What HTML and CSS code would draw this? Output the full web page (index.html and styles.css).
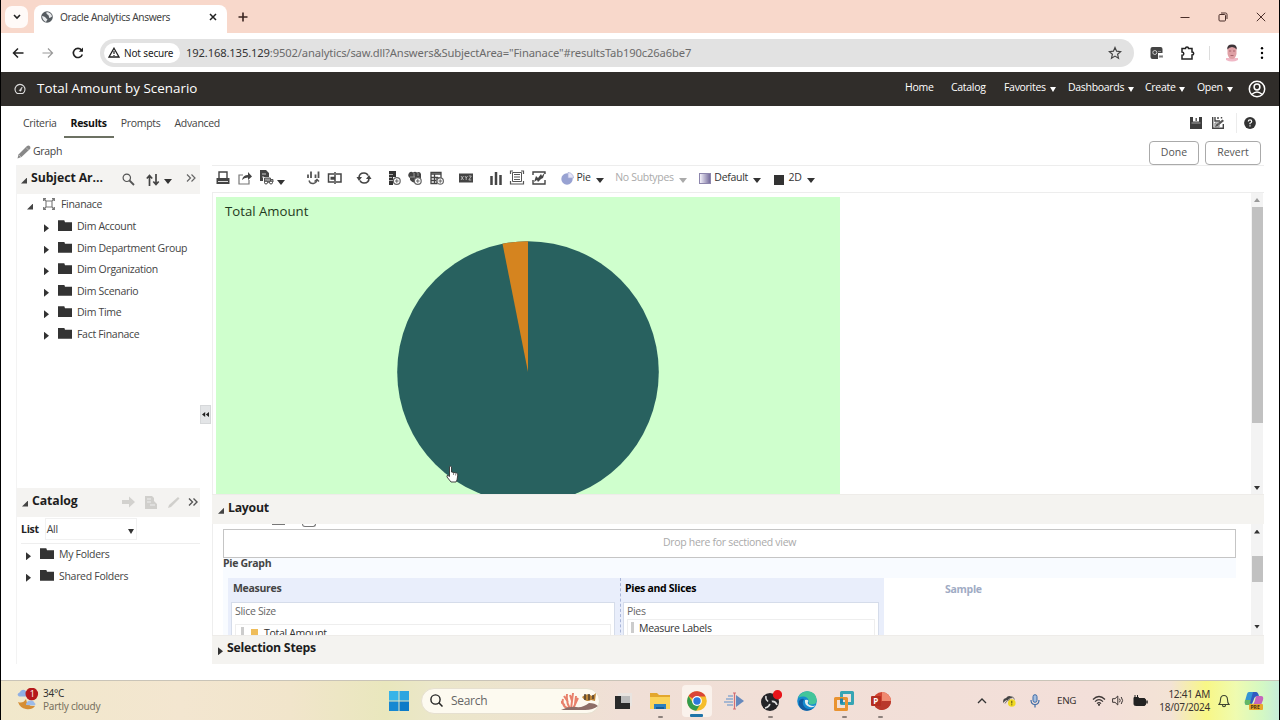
FILE: index.html
```html
<!DOCTYPE html>
<html lang="en">
<head>
  <meta charset="UTF-8">
  <meta name="viewport" content="width=device-width, initial-scale=1.0">
  <title>Oracle Analytics Answers</title>
  <link rel="stylesheet" href="styles.css">
</head>
<body>
  <div class="screen">

    <!-- Browser tab strip -->
    <div class="tab-strip">
      <div class="tab-search">
        <svg width="8" height="6" viewBox="0 0 8 6"><path d="M1 1l3 3 3-3" fill="none" stroke="#222" stroke-width="1.6"/></svg>
      </div>
      <div class="tab">
        <svg class="globe" width="12" height="12" viewBox="0 0 12 12"><circle cx="6" cy="6" r="5.800" fill="#555b60"/><path d="M1 5q2.500 0 3.500 1.500T6.500 8L5 11Q1.500 9.500 1 5zM5.500 1q-.5 2 1 2.500T8 6t3-.5Q10.500 1.500 5.500 1z" fill="#e8eaec"/></svg>
        <span class="tab-title">Oracle Analytics Answers</span>
        <svg width="8" height="8" viewBox="0 0 8 8"><path d="M1 1l6 6M7 1L1 7" stroke="#222" stroke-width="1.500"/></svg>
      </div>
      <svg class="new-tab" width="10" height="10" viewBox="0 0 10 10"><path d="M5 .5v9M.5 5h9" stroke="#3a2420" stroke-width="1.600"/></svg>
      <div class="window-buttons">
        <svg width="10" height="10" viewBox="0 0 10 10"><path d="M.5 5.500h9" stroke="#4a2f2a"/></svg>
        <svg width="10" height="10" viewBox="0 0 10 10"><path d="M1 3.500q0-1 1-1h4.500q1 0 1 1V8q0 1-1 1H2q-1 0-1-1zM3 1h4.500Q9 1 9 2.500V7" fill="none" stroke="#4a2f2a"/></svg>
        <svg width="10" height="10" viewBox="0 0 10 10"><path d="M.8.8l8.400 8.400M9.200.8L.8 9.200" stroke="#4a2f2a"/></svg>
      </div>
    </div>

    <!-- Browser address bar -->
    <div class="address-bar">
      <svg class="nav" width="12" height="12" viewBox="0 0 12 12"><path d="M11.500 6H1.500M6 1.500L1.500 6 6 10.500" fill="none" stroke="#222" stroke-width="1.500"/></svg>
      <svg class="nav" width="12" height="12" viewBox="0 0 12 12"><path d="M.5 6h10M6 1.500L10.500 6 6 10.500" fill="none" stroke="#999" stroke-width="1.200"/></svg>
      <svg class="nav" width="12" height="12" viewBox="0 0 12 12"><path d="M10.300 7.500A4.600 4.600 0 1 1 9.500 3" fill="none" stroke="#222" stroke-width="1.600"/><path d="M11 .5v4.300H6.800z" fill="#222"/></svg>
      <div class="omnibox">
        <div class="not-secure">
          <svg width="12" height="11" viewBox="0 0 12 11"><path d="M6 1.200L11 10H1z" fill="none" stroke="#222" stroke-width="1.300"/><path d="M6 4v3M6 8v1" stroke="#222" stroke-width="1.200"/></svg>
          <span>Not secure</span>
        </div>
        <span class="url"><b>192.168.135.129</b>:9502/analytics/saw.dll?Answers&amp;SubjectArea="Finanace"#resultsTab190c26a6be7</span>
        <svg class="star" width="14" height="14" viewBox="0 0 14 14"><path d="M7 1.500l1.600 3.700 4 .4-3 2.700.9 3.900L7 10.100l-3.500 2.100.9-3.900-3-2.700 4-.4z" fill="none" stroke="#444" stroke-width="1.200"/></svg>
      </div>
      <svg class="ext" width="13" height="12" viewBox="0 0 13 12"><path d="M2.500 0h8Q12.500 0 12.500 2v4H8v6H2.500Q.5 12 .5 10V2q0-2 2-2z" fill="#444"/><circle cx="4.800" cy="5.500" r="2" fill="none" stroke="#ccc"/><path d="M8 4.500h3M9 8.500h4v2H9z" fill="#777" stroke="#bbb" stroke-width=".6"/></svg>
      <svg class="puzzle" width="15" height="14" viewBox="0 0 15 14"><path d="M2 2.500h3.500q0-1.500 1.500-1.500t1.500 1.500H12v3.500q1.700 0 1.700 1.500T12 9v4H2V9.300q1.800 0 1.800-1.600T2 6z" fill="none" stroke="#222" stroke-width="1.500"/></svg>
      <span class="bar-divider"></span>
      <svg class="avatar" width="14" height="18" viewBox="0 0 14 18"><path d="M1 14h12v2q-6 3-12 0z" fill="#f0b8c6"/><path d="M2.500 5q0-4 4.500-4t4.500 4v5q-1 5-4.500 5T2.500 10z" fill="#dfa0a5"/><path d="M2.300 5.500Q1.800.5 7 .5t4.700 5Q10 3 7 3T2.300 5.500z" fill="#3d3438"/><path d="M4 7h2.200M8 7h2.200M5.500 11.500h3" stroke="#9a5560" stroke-width=".8"/></svg>
      <svg class="kebab" width="4" height="14" viewBox="0 0 4 14"><circle cx="2" cy="2.300" r="1.200"/><circle cx="2" cy="7" r="1.200"/><circle cx="2" cy="11.700" r="1.200"/></svg>
    </div>

    <!-- Application header -->
    <header class="app-header">
      <svg width="12" height="12" viewBox="0 0 12 12"><path d="M3.200 10.500a5 5 0 1 1 5.600 0z" fill="none" stroke="#ddd" stroke-width="1.100"/><path d="M5.200 7.500l3-3.500-1.400 4.200z" fill="#ddd" stroke="#ddd" stroke-width=".6"/></svg>
      <h1>Total Amount by Scenario</h1>
      <nav>
        <a class="nav-home">Home</a>
        <a class="nav-catalog">Catalog</a>
        <a class="nav-favorites">Favorites<i class="caret"></i></a>
        <a class="nav-dashboards">Dashboards<i class="caret"></i></a>
        <a class="nav-create">Create<i class="caret"></i></a>
        <a class="nav-open">Open<i class="caret"></i></a>
      </nav>
      <svg class="user" width="18" height="18" viewBox="0 0 18 18"><g fill="none" stroke="#fff" stroke-width="1.500"><circle cx="9" cy="9" r="7.700"/><circle cx="9" cy="7" r="2.900"/><path d="M4 14.300q5-4.600 10 0"/></g></svg>
    </header>

    <!-- Answers editor -->
    <main class="page">
      <div class="tabs-row">
        <a class="page-tab">Criteria</a>
        <a class="page-tab active">Results</a>
        <a class="page-tab">Prompts</a>
        <a class="page-tab">Advanced</a>
        <div class="page-actions">
          <svg width="12" height="12" viewBox="0 0 12 12"><path d="M0 0h3v4.500h6V0h3v12H0z" fill="#3c3c3c"/><path d="M6.200 1v3" stroke="#444" stroke-width="1.300"/><path d="M1.500 6h9" stroke="#bbb" stroke-width=".8"/></svg>
          <svg width="13" height="12" viewBox="0 0 13 12"><path d="M.7 0v11.300h10.600V7M3 0v4h5M6 0v2M9.500 0v1.500" fill="none" stroke="#444" stroke-width="1.400"/><path d="M3 10l1-2.500 6.500-5 1.500 1.600L5.500 9.300z" fill="#555"/><path d="M3 6h4v4H3z" fill="none" stroke="#777"/></svg>
          <span class="action-divider"></span>
          <svg width="12" height="12" viewBox="0 0 12 12"><circle cx="6" cy="6" r="5.900" fill="#333"/><path d="M4.300 4.600q0-1.700 1.700-1.700t1.700 1.500Q7.700 5.500 6 6.200v1M6 8.200v1.200" fill="none" stroke="#fff" stroke-width="1.200"/></svg>
        </div>
      </div>

      <div class="view-row">
        <svg width="14" height="14" viewBox="0 0 14 14"><path d="M.5 13.500l1-4L10 1q2-1 3 .5t0 2.500L4.500 12z" fill="#888"/><path d="M2 10l2 2M9 2.500l2.500 2.500" stroke="#bbb"/></svg>
        <span>Graph</span>
        <button class="btn btn-done">Done</button>
        <button class="btn btn-revert">Revert</button>
      </div>

      <div class="workspace">
        <aside class="sidebar">
          <div class="pane-header">
            <i class="tri-open"></i>
            <h2>Subject Ar...</h2>
            <div class="pane-tools subject-tools">
              <svg width="13" height="13" viewBox="0 0 13 13"><circle cx="4.800" cy="4.800" r="3.700" fill="none" stroke="#555" stroke-width="1.200"/><path d="M7.500 7.500L12 12" stroke="#555" stroke-width="1.800"/></svg>
              <svg width="14" height="12" viewBox="0 0 14 12"><path d="M3.500 12V2M.8 4.500l2.700-3 2.700 3M10 0v10M7.300 7.500l2.700 3 2.700-3" fill="none" stroke="#444" stroke-width="1.700"/></svg>
              <i class="caret dark"></i>
              <svg width="10" height="8" viewBox="0 0 10 8"><path d="M1 .5L4.500 4 1 7.500M5.500.5L9 4 5.500 7.500" fill="none" stroke="#666" stroke-width="1.200"/></svg>
            </div>
          </div>
          <div class="tree subject-tree">
            <div class="tree-root"><i class="tri-open"></i>
              <svg width="12" height="12" viewBox="0 0 12 12"><path d="M3 3h6v6H3zM.6 3V.6H3M9 .6h2.400V3M11.400 9v2.400H9M3 11.400H.6V9M3 3L1 1M9 3l2-2M9 9l2 2M3 9l-2 2" fill="none" stroke="#777" stroke-width="1.100"/></svg>
              <span>Finanace</span></div>
            <div class="tree-item"><i class="tri"></i><i class="folder"></i><span>Dim Account</span></div>
            <div class="tree-item"><i class="tri"></i><i class="folder"></i><span>Dim Department Group</span></div>
            <div class="tree-item"><i class="tri"></i><i class="folder"></i><span>Dim Organization</span></div>
            <div class="tree-item"><i class="tri"></i><i class="folder"></i><span>Dim Scenario</span></div>
            <div class="tree-item"><i class="tri"></i><i class="folder"></i><span>Dim Time</span></div>
            <div class="tree-item"><i class="tri"></i><i class="folder"></i><span>Fact Finanace</span></div>
          </div>
          <div class="pane-header catalog-header">
            <i class="tri-open"></i>
            <h2>Catalog</h2>
            <div class="pane-tools catalog-tools">
              <svg width="13" height="12" viewBox="0 0 13 12"><path d="M0 4h7V.5L13 6l-6 5.500V8H0z" fill="#d2d1ce"/></svg>
              <svg width="14" height="13" viewBox="0 0 14 13"><path d="M1 0h7l2 2v3l3 3v5H1z" fill="#d0cfcc"/><path d="M3 3h4M3 6h4M6 9h5" stroke="#eee"/></svg>
              <svg width="13" height="13" viewBox="0 0 13 13"><path d="M1 12l1-3L11 1l1.500 1.500L4 11z" fill="#d0cfcc"/></svg>
              <svg width="10" height="8" viewBox="0 0 10 8"><path d="M1 .5L4.500 4 1 7.500M5.500.5L9 4 5.500 7.500" fill="none" stroke="#555" stroke-width="1.400"/></svg>
            </div>
          </div>
          <div class="list-row">
            <b>List</b>
            <div class="list-select"><span>All</span><i class="caret dark"></i></div>
          </div>
          <div class="tree catalog-tree">
            <div class="tree-item"><i class="tri"></i><i class="folder"></i><span>My Folders</span></div>
            <div class="tree-item"><i class="tri"></i><i class="folder"></i><span>Shared Folders</span></div>
          </div>
        </aside>

        <div class="splitter">
          <div class="collapse"><svg width="7" height="5" viewBox="0 0 7 5"><path d="M3.200 0v5L0 2.500zM7 0v5L3.800 2.500z" fill="#222"/></svg></div>
        </div>

        <section class="editor">
          <div class="toolbar">
            <div class="tool-group">
              <svg width="16" height="16" viewBox="0 0 16 16"><path d="M4 8V2h8v6" fill="none" stroke="#444" stroke-width="1.400"/><path d="M1.500 8h13v6h-13z" fill="#444"/><path d="M3 11.500h10" stroke="#ddd"/></svg>
              <svg width="16" height="16" viewBox="0 0 16 16"><path d="M6 5H2v9h10v-4" fill="none" stroke="#777" stroke-width="1.200"/><path d="M5 10q1-5 6-5V2l4 4.500-4 3.500V7.500Q7 7.500 5 10z" fill="#444"/></svg>
              <svg width="16" height="16" viewBox="0 0 16 16"><path d="M2 0h6l3 3v4H5v4H2z" fill="#444"/><path d="M4 4h4M4 7h2" stroke="#ccc"/><path d="M6.500 8h6v4h-6zM12 9.500h3V12M6.500 12H15" fill="#999" stroke="#555"/><circle cx="8" cy="12.500" r="1.500" fill="#fff" stroke="#444"/><circle cx="13" cy="12.500" r="1.500" fill="#fff" stroke="#444"/></svg>
              <i class="caret dark export-caret"></i>
            </div>
            <div class="tool-group">
              <svg width="16" height="16" viewBox="0 0 16 16"><path d="M3 4.500V8M6 1.500V8M10.500 4.500V8M13.500 1.500V8" stroke="#555" stroke-width="1.800"/><path d="M4 10.500q1 3.500 4.500 3 3-.5 3.500-3.500M9.500 11.500L12 9.500l2 2" fill="none" stroke="#555" stroke-width="1.400"/></svg>
              <svg width="16" height="16" viewBox="0 0 16 16"><path d="M7 4H1.500v8H7M3.500 7.500H7V9H3.500M9 4h5v8H9M8 2v12" fill="none" stroke="#444" stroke-width="1.500"/></svg>
            </div>
            <div class="tool-group">
              <svg width="16" height="16" viewBox="0 0 16 16"><path d="M3 8q0-5 5-5 3 0 4 2.500M13 8q0 5-5 5-3 0-4-2.500" fill="none" stroke="#444" stroke-width="1.600"/><path d="M.5 7h5.500L3 11zM10 9h5.500L13 5z" fill="#444"/></svg>
            </div>
            <div class="tool-group">
              <svg width="16" height="16" viewBox="0 0 16 16"><path d="M3 1h7v6H7v8H3z" fill="#333"/><path d="M3 4.500h4M3 7.500h3M3 10.500h4" stroke="#aaa"/><circle cx="10.800" cy="11" r="3.400" fill="#fff" stroke="#666" stroke-width="1.200"/><path d="M9 11h3.600M10.800 9.200v3.600" stroke="#666"/></svg>
              <svg width="16" height="16" viewBox="0 0 16 16"><path d="M2 3q2-2 4-.5Q8 1 10 2.500 13 1 14 4v4H8v5Q2 11 3 8 0 6 2 3z" fill="#444"/><path d="M7 3v4M3 7h5M11 3v3" stroke="#999"/><circle cx="10.800" cy="11" r="3.400" fill="#fff" stroke="#666" stroke-width="1.200"/><path d="M9 11h3.600M10.800 9.200v3.600" stroke="#666"/></svg>
              <svg width="16" height="16" viewBox="0 0 16 16"><path d="M2 2.500h10V8H8v5.500H2z" fill="#fff" stroke="#444" stroke-width="1.300"/><path d="M2 4h10M2 7.500h7M2 10.500h5M5.500 4v9" stroke="#444" stroke-width="1.300"/><circle cx="11.200" cy="11" r="3.200" fill="#fff" stroke="#666" stroke-width="1.200"/><path d="M9.500 11h3.600M11.200 9.300v3.600" stroke="#666"/></svg>
            </div>
            <div class="tool-group">
              <svg width="16" height="16" viewBox="0 0 16 16"><path d="M1 3.500h14v9H1z" fill="#444"/><path d="M3 6l2.500 4M5.500 6L3 10M7 6l1.200 2L9.500 6M8.200 8v2M10.800 6h2.500l-2.500 4h2.500" fill="none" stroke="#ccc" stroke-width=".8"/></svg>
            </div>
            <div class="tool-group">
              <svg width="16" height="16" viewBox="0 0 16 16"><path d="M3.500 6v9M8 2v13M12.500 5v10" stroke="#444" stroke-width="2.500"/></svg>
              <svg width="16" height="16" viewBox="0 0 16 16"><path d="M3.500 2.500h9v9h-9z" fill="none" stroke="#555"/><path d="M5 4.500h6M5 7h6M5 9.500h6M1.500 4V1H4M12 1h2.500v3M1.500 11v3h13v-3" fill="none" stroke="#555" stroke-width="1.200"/></svg>
              <svg width="16" height="16" viewBox="0 0 16 16"><path d="M2 5V2h12v2M2 10v4h12v-4" fill="none" stroke="#444" stroke-width="1.400"/><path d="M3 12l2-6 2 2 3-4 1 2 3-4-2 6-2 1-3 3-1-2z" fill="#444"/></svg>
            </div>
            <div class="tool-menu">
              <svg width="13" height="13" viewBox="0 0 13 13"><circle cx="6" cy="7" r="5.700" fill="#98a2d2"/><path d="M7 6V.5A5.500 5.500 0 0 1 12.500 6z" fill="#e4e4f8" stroke="#a6acd5" stroke-width=".7"/></svg>
              <span>Pie</span><i class="caret dark"></i>
            </div>
            <div class="tool-menu disabled"><span>No Subtypes</span><i class="caret"></i></div>
            <div class="tool-menu menu-default"><i class="swatch"></i><span>Default</span><i class="caret dark"></i></div>
            <div class="tool-menu menu-2d"><i class="square"></i><span>2D</span><i class="caret dark"></i></div>
          </div>

          <div class="graph-pane">
            <div class="graph">
              <div class="graph-title">Total Amount</div>
              <svg class="pie" width="262" height="262" viewBox="-131 -131 262 262">
                <circle r="130.800" fill="#28615f"/>
                <path d="M0 0L-25.500-128.300A130.800 130.800 0 0 1 0-130.800z" fill="#d5841f"/>
              </svg>
            </div>
            <div class="scrollbar graph-scroll">
              <i class="arrow-up light"></i>
              <div class="thumb"></div>
              <i class="arrow-down"></i>
            </div>
          </div>

          <div class="section-header"><i class="tri-open"></i><h2>Layout</h2></div>

          <div class="layout-pane">
            <div class="layout-body">
              <div class="cut-icons"><i class="cut-line"></i><i class="cut-box"></i></div>
              <div class="drop-zone">Drop here for sectioned view</div>
              <div class="pie-layout">
                <h3>Pie Graph</h3>
                <div class="layout-cols">
                  <div class="col measures">
                    <h4>Measures</h4>
                    <div class="box">
                      <span class="box-label">Slice Size</span>
                      <div class="chip"><i class="grip"></i><i class="measure-icon"></i><span>Total Amount</span></div>
                    </div>
                  </div>
                  <div class="col slices">
                    <h4>Pies and Slices</h4>
                    <div class="box">
                      <span class="box-label">Pies</span>
                      <div class="chip"><i class="grip"></i><span>Measure Labels</span></div>
                    </div>
                  </div>
                  <div class="col sample">Sample</div>
                </div>
              </div>
            </div>
            <div class="scrollbar layout-scroll">
              <i class="arrow-up"></i>
              <div class="thumb"></div>
              <i class="arrow-down"></i>
            </div>
          </div>

          <div class="section-header"><i class="tri"></i><h2>Selection Steps</h2></div>
        </section>
      </div>
    </main>

    <!-- Windows taskbar -->
    <footer class="taskbar">
      <svg class="weather" width="22" height="22" viewBox="0 0 22 22"><path d="M2 8.500Q-1 6 2.500 4.500 5 0 9 3l2 5.500z" fill="#8fb0e4"/><path d="M1 14q5 2 8-3 1 8 9 7-3 4-9 3T1 14z" fill="#d58e35"/><path d="M9 17q0-4 4-4.500 4-.5 4.500 2.500 2 1 0 2.500z" fill="#9dbbe8"/><circle cx="14.800" cy="6" r="6.300" fill="#b5191c"/><text x="12.700" y="9.200" class="badge-text">1</text></svg>
      <div class="weather-text"><span>34°C</span><span class="muted">Partly cloudy</span></div>

      <svg class="start" width="20" height="20" viewBox="0 0 20 20"><path d="M0 0h9.500v9.500H0z" fill="#36b4e8"/><path d="M10.500 0H20v9.500h-9.500z" fill="#2ba5e0"/><path d="M0 10.500h9.500V20H0z" fill="#1688d2"/><path d="M10.500 10.500H20V20h-9.500z" fill="#0c7bc8"/></svg>
      <div class="search">
        <svg width="13" height="13" viewBox="0 0 13 13"><circle cx="5.500" cy="5.500" r="4.600" fill="none" stroke="#222" stroke-width="1.400"/><path d="M8.800 8.800L12.500 12.500" stroke="#222" stroke-width="1.500"/></svg>
        <span>Search</span>
        <svg class="coral" width="37" height="20" viewBox="0 0 37 20"><path d="M8 18Q0 15 2 8M9 18Q5 11 6 3M10 18q1-8 2-16M12 18q3-7 5-11M4 14Q1 13 0 10M7 11L3 5M11 10L9 4M14 13l1-8" fill="none" stroke="#e8806b" stroke-width="2"/><path d="M0 19q8-4 15-3t13-4q6 0 9 3-5 4-13 4z" fill="#8c6e68"/><path d="M21 6q5-5 10-1l4-3-1 8-4-1q-5 3-9-3z" fill="#bd8638"/><path d="M24 3v6M28 3v6M32 4v4" stroke="#3d3430" stroke-width="1.300"/></svg>
      </div>
      <div class="apps">
        <div class="app"><svg width="20" height="20" viewBox="0 0 20 20"><path d="M5 2h14v13H5z" fill="#e9e4e0"/><path d="M2 5h6v7h9v6H2z" fill="#292929"/><path d="M8 5h9v7H8z" fill="#bbb"/></svg></div>
        <div class="app running"><svg width="20" height="20" viewBox="0 0 20 20"><path d="M0 2h7l2 2h11v14H0z" fill="#e3a72e"/><path d="M0 6h20v12H0z" fill="#fbd35a"/><path d="M4 13h12v5H4z" fill="#2c7fbe"/><path d="M6 16h8v2H6z" fill="#185c94"/></svg></div>
        <div class="app active"><svg width="20" height="20" viewBox="0 0 20 20"><circle cx="10" cy="10" r="9.800" fill="#f5bd2b"/><path d="M10 10L1.500 5A9.800 9.800 0 0 1 18.700 5.500H10z" fill="#da4436"/><path d="M10 10l-3.900 2.300L1.500 5a9.800 9.800 0 0 0 7.700 14.800l4.600-7.500z" fill="#329b4e"/><circle cx="10" cy="10" r="4.900" fill="#fff"/><circle cx="10" cy="10" r="3.700" fill="#2c78dc"/></svg></div>
        <div class="app"><svg width="20" height="20" viewBox="0 0 20 20"><path d="M4 5h5M2 8h7M0 11h9M3 14h6" stroke="#8daad0" stroke-width="1.300"/><path d="M12 4l8 6-8 6z" fill="#6689bd"/><path d="M10.500 2v16M9 2h3M9 18h3" stroke="#d36d73" stroke-width="1.200"/></svg></div>
        <div class="app running"><svg width="22" height="22" viewBox="0 0 22 22"><circle cx="10" cy="12" r="9" fill="#242428"/><path d="M10 12q-5-1-4-6M10 12q5-2 7 3M10 12q0 5-5 6" fill="none" stroke="#ddd" stroke-width="1.600"/><circle cx="10" cy="12" r="2" fill="#242428"/><circle cx="17.500" cy="4.700" r="4.700" fill="#e8141a"/></svg></div>
        <div class="app"><svg width="20" height="20" viewBox="0 0 20 20"><circle cx="10" cy="10" r="9.800" fill="#168bd0"/><path d="M1 7Q4 0 11 .3q8 .7 8.800 8.700-.3 5-5.800 4.500-3-.5-2-3Q11 6 7 5.500 3 5 1 7z" fill="#43c59a"/><path d="M7 8q-3 5 1 8.500 4 3 9 0-5 5-11 2.500Q1 16 2 10q2-3 5-2z" fill="#115a9f"/><path d="M8 9q-1 5 4.500 7 4 1 6-1.500-3 1-6-.5t-1-4q-1-2-3.500-1z" fill="#e4efee"/></svg></div>
        <div class="app running"><svg width="20" height="20" viewBox="0 0 20 20"><path d="M7.500 1.500h11v11h-11z" fill="none" stroke="#37a5b4" stroke-width="3" stroke-linejoin="round"/><path d="M1.500 7.500h11v11h-11z" fill="none" stroke="#e99331" stroke-width="3" stroke-linejoin="round"/><path d="M7.500 12.500V7.500" fill="none" stroke="#1e83ad" stroke-width="3"/></svg></div>
        <div class="app running"><svg width="20" height="20" viewBox="0 0 20 20"><circle cx="11" cy="10" r="9" fill="#cf4532"/><path d="M11 1a9 9 0 0 1 9 9h-9z" fill="#f08a70"/><path d="M20 10a9 9 0 0 1-16 5.500l7-5.500z" fill="#b8382b"/><rect y="5" width="10" height="10" rx="1" fill="#b52d20"/><text x="2.300" y="13" class="ppt-text">P</text></svg></div>
      </div>

      <div class="tray">
        <svg class="t-chevron" width="10" height="6" viewBox="0 0 10 6"><path d="M1 5l4-4 4 4" fill="none" stroke="#333" stroke-width="1.300"/></svg>
        <svg class="t-cloud" width="14" height="12" viewBox="0 0 14 12"><path d="M1.500 8Q0 4 4 3q3-4 7 0-4 0-5 2-3 0-4.500 3z" fill="#444"/><path d="M3 8.500q1-3 5-4M8 1.500q4 0 4.500 3" fill="none" stroke="#777"/><circle cx="9.800" cy="8" r="3.800" fill="#f0d923"/><path d="M9.800 5.800v2.700M9.800 9.300v1" stroke="#554b10"/></svg>
        <svg class="t-mic" width="10" height="14" viewBox="0 0 10 14"><rect x="3" y=".7" width="4" height="7.600" rx="2" fill="#a5bedf" stroke="#3d6aa5"/><path d="M1 6q0 4.500 4 4.500T9 6M5 10.500v3" fill="none" stroke="#3d6aa5" stroke-width="1.200"/></svg>
        <span class="t-lang">ENG</span>
        <svg class="t-wifi" width="14" height="11" viewBox="0 0 14 11"><path d="M1 4.500q6-6 12 0M3 6.700q4-4 8 0M5 8.700q2-2 4 0" fill="none" stroke="#3c3534" stroke-width="1.200"/><circle cx="7" cy="9.800" r="1.100" fill="#3c3534"/></svg>
        <svg class="t-sound" width="12" height="11" viewBox="0 0 12 11"><path d="M.6 3.700H3L5.800 1v9L3 7.300H.6z" fill="none" stroke="#3c3534"/><path d="M7.500 3.700q1.400 1.800 0 3.600M9.200 2q2.800 3.500 0 7" fill="none" stroke="#3c3534"/></svg>
        <svg class="t-battery" width="15" height="12" viewBox="0 0 15 12"><rect x="1" y="3.500" width="11.500" height="7" rx="1.500" fill="#222" stroke="#222"/><path d="M14 5.500v3" stroke="#222" stroke-width="1.500"/><path d="M2 0v3M4.500 0v3M1 2.500h4.500v2H1z" stroke="#222" fill="#222"/></svg>
        <div class="clock"><span>12:41 AM</span><span>18/07/2024</span></div>
        <svg class="t-bell" width="12" height="14" viewBox="0 0 12 14"><path d="M1 10.500q1.500-1.500 1.500-5Q2.700 1.500 6 1.500t3.500 4q0 3.500 1.500 5zM4.500 11q0 1.700 1.500 1.700T7.500 11" fill="none" stroke="#3d4430" stroke-width="1.100"/></svg>
        <svg class="t-copilot" width="20" height="20" viewBox="0 0 20 20"><path d="M5 1h7l2 4-5 2-2 7H3q-3 0-2-4l2-7q.5-2 2-2z" fill="#3494d4"/><path d="M1 9h7l-1 5H3q-3 0-2-5z" fill="#64b864"/><path d="M9 1h3q2 0 3 4-4-1-5 3L8 13l-2-1z" fill="#315bc0"/><path d="M12 5h5q3 0 2 4l-2 5H7q3 0 4-5z" fill="#c565bd"/><rect x="5" y="13" width="14" height="6" rx="1" fill="#e9a82d"/><text x="6.500" y="18.300" class="pre-text">PRE</text></svg>
      </div>
    </footer>

    <svg class="cursor" width="13" height="18" viewBox="0 0 13 18"><path d="M3.500 1.500q1.500-1 2 .5v5l5 1q1.500.5 1.300 2l-.8 5-1 2H5L1 12q-.5-2 1-1.500l1.500 1z" fill="#fff" stroke="#333" stroke-width=".9"/><path d="M7.500 8v2M9.700 8.500v2" stroke="#555" stroke-width=".7"/></svg>
  </div>
</body>
</html>
```

FILE: styles.css
```css
* {
  box-sizing: border-box;
}

body {
  margin: 0;
  font-family: "Open Sans", "Noto Sans", sans-serif;
  font-size: 10.5px;
  letter-spacing: -0.3px;
  color: #444;
}

svg {
  display: block;
  flex: none;
}

span, a, b {
  white-space: nowrap;
}

h1, h2, h3, h4 {
  margin: 0;
  white-space: nowrap;
}

.screen {
  position: relative;
  width: 1280px;
  height: 720px;
  overflow: hidden;
  border-left: 1px solid #000;
  border-right: 1px solid #000;
  background: #fff;
  display: flex;
  flex-direction: column;
}

/* browser chrome */
.tab-strip {
  height: 33px;
  background: #f8d8cb;
  display: flex;
  align-items: center;
  padding-left: 4px;
}

.tab-search {
  width: 23px;
  height: 22px;
  border-radius: 7px;
  background: #fffaf8;
  display: flex;
  align-items: center;
  justify-content: center;
}

.tab {
  width: 193px;
  height: 28px;
  margin: 5px 0 0 6px;
  padding: 0 10px 5px 7px;
  background: #fff;
  border-radius: 8px 8px 0 0;
  display: flex;
  align-items: center;
}

.tab-title {
  margin-left: 7px;
  flex: 1;
  font-family: "Noto Sans", sans-serif;
  font-size: 10.2px;
  letter-spacing: -0.38px;
  color: #444;
}

.new-tab {
  margin-left: 11px;
}

.window-buttons {
  margin-left: auto;
  margin-right: 13px;
  display: flex;
  gap: 28px;
}

.address-bar {
  height: 39px;
  display: flex;
  align-items: center;
  padding-left: 11px;
}

.nav {
  margin-right: 18px;
}

.omnibox {
  width: 1034px;
  height: 28px;
  margin-left: -2px;
  border-radius: 14px;
  background: #e2e2e2;
  display: flex;
  align-items: center;
  padding: 0 12px 0 4px;
}

.not-secure {
  width: 76px;
  height: 20px;
  border-radius: 10px;
  background: #fff;
  display: flex;
  align-items: center;
  padding-left: 4px;
  gap: 4px;
  font-family: "Noto Sans", sans-serif;
  font-size: 10px;
  letter-spacing: -0.15px;
  color: #222;
}

.url {
  margin-left: 6px;
  flex: 1;
  font-family: "Noto Sans", sans-serif;
  font-size: 11.2px;
  letter-spacing: -0.13px;
  color: #6b6b6b;
}

.url b {
  font-weight: normal;
  color: #333;
}

.ext {
  margin-left: 16px;
}

.puzzle {
  margin-left: 17px;
}

.bar-divider {
  width: 1px;
  height: 14px;
  margin-left: 14px;
  background: #ddd;
}

.avatar {
  margin-left: 15px;
}

.kebab {
  margin-left: 21px;
}

/* application header */
.app-header {
  height: 34px;
  background: #302d2a;
  color: #fff;
  display: flex;
  align-items: center;
  padding: 0 13px;
}

.app-header h1 {
  margin-left: 11px;
  padding-bottom: 2px;
  font-size: 13.4px;
  font-weight: normal;
  letter-spacing: 0;
}

.app-header nav {
  margin-left: auto;
  padding-bottom: 4px;
  display: flex;
}

.app-header a {
  display: flex;
  align-items: center;
}

.nav-home { width: 46px; }
.nav-catalog { width: 53px; }
.nav-favorites { width: 64px; }
.nav-dashboards { width: 77px; }
.nav-create { width: 52px; }
.nav-open { width: 51px; }

.caret {
  display: inline-block;
  flex: none;
  border: 3.5px solid transparent;
  border-top: 5px solid #fff;
  border-bottom: 0;
  margin-left: 4px;
  margin-top: 5px;
}

.caret.dark {
  border-top-color: #333;
}

/* page top rows */
.page {
  height: 574px;
  flex: none;
}

.tabs-row {
  height: 32px;
  display: flex;
  padding-left: 15px;
}

.page-tab {
  height: 32px;
  padding: 10px 7px 0;
}

.page-tab.active {
  font-weight: bold;
  color: #111;
  border-bottom: 2px solid #6c7163;
}

.page-actions {
  margin-left: auto;
  margin-right: 23px;
  padding-top: 2px;
  display: flex;
  align-items: center;
}

.page-actions svg + svg {
  margin-left: 10px;
}

.action-divider {
  width: 1px;
  height: 20px;
  margin: 0 7px 0 11px;
  background: #ececec;
}

.view-row {
  height: 27px;
  display: flex;
  align-items: center;
  padding: 0 18px 0 16px;
}

.view-row span {
  margin-left: 2px;
  margin-right: auto;
  padding-bottom: 1px;
}

.btn {
  height: 24px;
  margin-top: 3px;
  padding: 0 0 2px;
  border: 1px solid #aaa;
  border-radius: 4px;
  background: #fff;
  color: #555;
  font-family: inherit;
  font-size: 10.5px;
}

.btn-done {
  width: 50px;
}

.btn-revert {
  width: 56px;
  margin-left: 6px;
}

.workspace {
  height: 499px;
  margin: 0 15px;
  display: flex;
}

/* left pane */
.sidebar {
  width: 184px;
  border-left: 1px solid #f3f3f3;
}

.pane-header {
  height: 29px;
  padding: 0 4px 1px 4px;
  background: #f4f3f1;
  display: flex;
  align-items: center;
}

.pane-header h2,
.section-header h2 {
  margin-left: 4px;
  font-size: 12.3px;
  letter-spacing: -0.1px;
  color: #1d1d1d;
}

.pane-header h2 {
  padding-bottom: 3px;
}

.pane-tools {
  margin-left: auto;
  display: flex;
  align-items: center;
}

.subject-tools svg:nth-child(2) {
  margin: 2px 4px 0 11px;
}

.subject-tools .caret {
  margin: 4px 14px 0 0;
  border-width: 5px 4px 0;
}

.subject-tools svg:last-child {
  margin-bottom: 2px;
}

.catalog-header {
  padding-right: 2px;
}

.catalog-header .tri-open {
  margin-left: 1px;
}

.catalog-tools {
  gap: 9px;
}

.catalog-tools svg:last-child {
  margin-left: -1px;
}

.tri-open {
  flex: none;
  width: 6px;
  height: 6px;
  margin-top: 3px;
  background: #444;
  clip-path: polygon(100% 0, 100% 100%, 0 100%);
}

.tri {
  flex: none;
  width: 5px;
  height: 8px;
  margin-top: 3px;
  background: #333;
  clip-path: polygon(0 0, 100% 50%, 0 100%);
}

.folder {
  flex: none;
  width: 14px;
  height: 11px;
  background: #333;
  clip-path: polygon(0 0, 45% 0, 50% 18%, 100% 18%, 100% 100%, 0 100%);
}

.subject-tree {
  height: 294px;
}

.tree-root {
  height: 22px;
  display: flex;
  align-items: center;
  padding-left: 10px;
}

.tree-root svg {
  margin-left: 10px;
  margin-bottom: 2px;
}

.tree-root span {
  margin-left: 6px;
  padding-bottom: 2px;
}

.tree-item {
  height: 21.5px;
  display: flex;
  align-items: center;
  padding-left: 27px;
}

.tree-item .folder {
  margin-left: 9px;
  margin-bottom: 2px;
}

.tree-item span {
  margin-left: 5px;
  padding-bottom: 1px;
}

.list-row {
  height: 27px;
  margin-left: 4px;
  border-bottom: 1px solid #eee;
  display: flex;
  align-items: center;
  padding-bottom: 3px;
  color: #222;
}

.list-select {
  width: 92px;
  height: 22px;
  margin-left: 6px;
  border: 1px solid #f1f1f1;
  display: flex;
  align-items: center;
  justify-content: space-between;
  padding: 0 2px 0 1px;
  color: #444;
}

.catalog-tree .tree-item {
  padding-left: 9px;
}

.catalog-tree .folder {
  margin-left: 9px;
}

.splitter {
  width: 12px;
  padding-top: 240px;
}

.collapse {
  width: 11px;
  height: 19px;
  background: #e3e5e7;
  border: 1px solid #d6d8da;
  display: flex;
  align-items: center;
  justify-content: center;
}

/* right pane */
.editor {
  width: 1052px;
  display: flex;
  flex-direction: column;
}

.toolbar {
  height: 28px;
  border-top: 1px solid #ededed;
  border-bottom: 1px solid #ededed;
  display: flex;
  align-items: center;
  gap: 13.6px;
  padding: 0 0 2px 3px;
}

.tool-group {
  display: flex;
  align-items: center;
  gap: 5.5px;
}

.export-caret {
  margin: 8px 7px 0 -3px;
  border-width: 5px 4px 0;
}

.tool-menu {
  display: flex;
  align-items: center;
  color: #333;
}

.tool-menu span {
  margin-left: 3px;
  padding-bottom: 2px;
}

.tool-menu .caret {
  margin-left: 5px;
  margin-top: 4px;
  border-width: 5px 4px 0;
}

.tool-menu.disabled {
  color: #aaa;
  margin-left: -5px;
}

.tool-menu.disabled .caret {
  border-top-color: #aaa;
}

.menu-default {
  margin-left: -1px;
}

.swatch {
  width: 12px;
  height: 11px;
  border: 1px solid #8d86ad;
  background: linear-gradient(90deg, #f4f2fb, #756c9c);
}

.square {
  width: 10px;
  height: 10px;
  margin-top: 3px;
  background: #333;
}

.menu-2d {
  margin-left: -1px;
}

.menu-2d span {
  margin-left: 5px;
}

.graph-pane {
  height: 301px;
  padding: 4px 0 0 3px;
  border-left: 1px solid #eee;
  display: flex;
  justify-content: space-between;
  overflow: hidden;
}

.graph {
  width: 624px;
  height: 297px;
  background: #cfffcd;
  overflow: hidden;
}

.graph-title {
  height: 44px;
  padding: 5px 9px;
  font-size: 13.2px;
  letter-spacing: 0;
  color: #1f3a20;
}

.pie {
  margin-left: 181px;
}

.scrollbar {
  width: 12px;
  background: #f3f3f3;
  display: flex;
  flex-direction: column;
  align-items: center;
}

.arrow-up,
.arrow-down {
  flex: none;
  width: 6px;
  height: 4px;
  background: #333;
}

.arrow-up {
  clip-path: polygon(50% 0, 100% 100%, 0 100%);
}

.arrow-up.light {
  background: #999;
}

.arrow-down {
  margin-top: auto;
  clip-path: polygon(0 0, 100% 0, 50% 100%);
}

.thumb {
  width: 11px;
  background: #c1c1c1;
}

.graph-scroll {
  margin-top: -4px;
  margin-right: 1px;
  padding: 5px 0 4px;
}

.graph-scroll .thumb {
  height: 216px;
  margin-top: 5px;
}

.section-header {
  flex: none;
  height: 29.5px;
  padding-left: 6px;
  background: #f4f3f0;
  border-top: 1px solid #eeece9;
  display: flex;
  align-items: center;
}

.section-header h2 {
  padding-bottom: 3px;
  letter-spacing: -0.25px;
}

.section-header .tri + h2 {
  padding-bottom: 5px;
}

.layout-pane {
  height: 111px;
  border-left: 1px solid #eee;
  display: flex;
  overflow: hidden;
}

.layout-body {
  width: 1038px;
  padding: 0 15px 0 10px;
  overflow: hidden;
}

.cut-icons {
  height: 5px;
  display: flex;
  padding-left: 49px;
  gap: 17px;
}

.cut-line {
  width: 13px;
  height: 1px;
  background: #777;
}

.cut-box {
  width: 14px;
  height: 3px;
  border: 1px solid #777;
  border-top: 0;
  border-radius: 0 0 3px 3px;
}

.drop-zone {
  height: 29px;
  border: 1px solid #c5c5c5;
  text-align: center;
  line-height: 25px;
  color: #aaa;
}

.pie-layout {
  background: #f8fbff;
}

.pie-layout h3 {
  height: 20px;
  line-height: 11px;
  font-size: 10.5px;
}

.layout-cols {
  display: flex;
  padding-left: 5px;
}

.col {
  height: 70px;
  background: #e9eefb;
}

.col h4 {
  height: 24px;
  line-height: 21px;
  padding-left: 5px;
  font-size: 10.5px;
}

.measures {
  width: 393px;
  padding-right: 5px;
  border-right: 1px dashed #a9b5d8;
}

.slices {
  width: 263px;
  padding-right: 5px;
}

.slices h4 {
  padding-left: 4px;
  color: #000;
}

.box {
  height: 50px;
  margin-left: 3px;
  padding: 0 3px;
  border: 1px solid #d5dcea;
  background: #fff;
}

.slices .box {
  margin-left: 2px;
}

.box-label {
  display: block;
  height: 16px;
  line-height: 16px;
  color: #666;
}

.chip {
  height: 24px;
  border: 1px solid #eee;
  display: flex;
  align-items: center;
  color: #333;
}

.measures .chip {
  margin-top: 5px;
  padding: 0 0 6px 5px;
}

.slices .chip {
  padding: 0 0 6px 3px;
}

.grip {
  width: 3px;
  height: 11px;
  background: #ccc;
}

.chip span {
  margin-left: 5px;
}

.measure-icon {
  width: 7px;
  height: 8px;
  margin-left: 7px;
  background: #efbd5a;
}

.measure-icon + span {
  margin-left: 6px;
}

.col.sample {
  flex: 1;
  background: #fff;
  padding: 4px 0 0 61px;
  font-weight: bold;
  color: #a0abc4;
}

.layout-scroll {
  padding: 6px 0;
}

.layout-scroll .thumb {
  height: 26px;
  margin-top: 22px;
}

/* taskbar */
.taskbar {
  height: 40px;
  flex: none;
  border-top: 1px solid #c9c4b8;
  background: linear-gradient(90deg, #f1e8cb 0, #f3e6d0 180px, #f1e5cb 290px, #e9e7bd 385px, #ebe7c9 430px, #f0dfd6 620px, #f3dfd9 1100px, #f3e3d5 1170px, #f8f786 1205px, #effbb0 1235px, #d3f8c4 1262px, #c6ecd9 1278px);
  display: flex;
  align-items: center;
}

.weather {
  margin-left: 16px;
  margin-bottom: 4px;
}

.badge-text {
  font-size: 9px;
  fill: #fff;
}

.weather-text {
  width: 340px;
  margin-left: 4px;
  padding-bottom: 1px;
  display: flex;
  flex-direction: column;
  font-family: "Noto Sans", sans-serif;
  font-size: 10px;
  line-height: 13.5px;
  letter-spacing: -0.25px;
  color: #333;
}

.weather-text .muted {
  color: #777160;
}

.start {
  margin-left: 6px;
}

.search {
  width: 179px;
  height: 26px;
  margin-left: 12px;
  border-radius: 13px;
  border: 1px solid #e6e0d0;
  background: #fdfaf0;
  display: flex;
  align-items: center;
  padding: 0 1px 0 8px;
  font-size: 12px;
  color: #666;
}

.search span {
  margin-left: 8px;
}

.coral {
  margin-left: auto;
}

.apps {
  margin-left: 5px;
  display: flex;
}

.app {
  position: relative;
  width: 36.8px;
  height: 38px;
  display: flex;
  align-items: center;
  justify-content: center;
}

.app.active {
  width: 30px;
  height: 32px;
  margin: 3px 3.4px;
  border-radius: 4px;
  background: #faf2ec;
}

.app.running::after,
.app.active::after {
  content: "";
  position: absolute;
  bottom: 2px;
  width: 5px;
  height: 2px;
  border-radius: 1px;
  background: #8c817c;
}

.app.active::after {
  bottom: 0;
  width: 13px;
  height: 3px;
  background: #1f74a8;
}

.ppt-text {
  font-size: 8px;
  font-weight: bold;
  fill: #fff;
}

.tray {
  margin-left: auto;
  padding-right: 15px;
  display: flex;
  align-items: center;
  font-family: "Noto Sans", sans-serif;
  color: #3a3330;
}

.t-cloud { margin-left: 15px; }
.t-mic { margin-left: 14px; }
.t-lang { width: 21px; margin-left: 17px; font-size: 9.8px; }
.t-wifi { margin-left: 14px; }
.t-sound { margin-left: 6px; }
.t-battery { margin-left: 9px; }

.clock {
  width: 50px;
  margin-left: 12px;
  display: flex;
  flex-direction: column;
  align-items: flex-end;
  font-size: 10px;
  line-height: 13px;
  letter-spacing: -0.25px;
}

.t-bell { margin-left: 8px; }
.t-copilot { margin-left: 14px; }

.pre-text {
  font-size: 5px;
  font-weight: bold;
  letter-spacing: 0;
  fill: #4a3210;
}

.cursor {
  position: absolute;
  left: 445px;
  top: 465px;
}
```
